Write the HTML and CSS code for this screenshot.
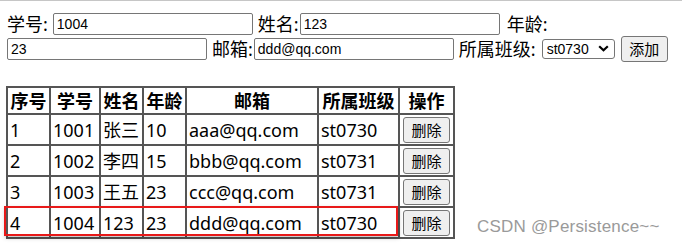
FILE: index.html
```html
<!DOCTYPE html>
<html lang="zh">
<head>
<meta charset="utf-8">
<title>学生管理</title>
<link rel="stylesheet" href="styles.css">
</head>
<body>
<div class="page">
  <form class="form">
    <div class="row">
      <label class="lbl">学号:</label><input class="txt" value="1004">
      <label class="lbl lbl-gap">姓名:</label><input class="txt w2" value="123">
      <label class="lbl lbl-gap2">年龄:</label>
    </div>
    <div class="row">
      <input class="txt" value="23">
      <label class="lbl lbl-gap">邮箱:</label><input class="txt" value="ddd@qq.com">
      <label class="lbl lbl-gap">所属班级:</label>
      <span class="sel">
        <select class="sel-native"><option>st0730</option><option>st0731</option></select>
        <svg class="chev" width="11" height="7" viewBox="0 0 11 7"><path d="M1.2 1.2 L5.5 5.3 L9.8 1.2" fill="none" stroke="#000" stroke-width="2.2"/></svg>
      </span>
      <button type="button" class="btn btn-add">添加</button>
    </div>
  </form>

  <div class="table-wrap">
    <table class="grid">
      <colgroup>
        <col class="c1"><col class="c2"><col class="c3"><col class="c4"><col class="c5"><col class="c6"><col class="c7">
      </colgroup>
      <thead>
        <tr><th>序号</th><th>学号</th><th>姓名</th><th>年龄</th><th>邮箱</th><th>所属班级</th><th>操作</th></tr>
      </thead>
      <tbody>
        <tr><td>1</td><td>1001</td><td>张三</td><td>10</td><td>aaa@qq.com</td><td>st0730</td><td class="op"><button type="button" class="btn btn-del">删除</button></td></tr>
        <tr><td>2</td><td>1002</td><td>李四</td><td>15</td><td>bbb@qq.com</td><td>st0731</td><td class="op"><button type="button" class="btn btn-del">删除</button></td></tr>
        <tr><td>3</td><td>1003</td><td>王五</td><td>23</td><td>ccc@qq.com</td><td>st0731</td><td class="op"><button type="button" class="btn btn-del">删除</button></td></tr>
        <tr><td>4</td><td>1004</td><td>123</td><td>23</td><td>ddd@qq.com</td><td>st0730</td><td class="op"><button type="button" class="btn btn-del">删除</button></td></tr>
      </tbody>
    </table>
    <div class="mark"></div>
  </div>
  <div class="watermark">CSDN @Persistence~~</div>
</div>
</body>
</html>
```

FILE: styles.css
```css
html, body {
  margin: 0;
  padding: 0;
  background: #fff;
}
body {
  width: 682px;
  height: 243px;
  overflow: hidden;
  border-top: 1px solid #c6c6c6;
  box-sizing: border-box;
  font-family: "Noto Sans", "Noto Sans CJK SC", sans-serif;
  color: #000;
}
.page {
  position: relative;
  height: 242px;
}
.form {
  padding: 10px 0 0 7px;
}
.row {
  display: flex;
  align-items: center;
  height: 25px;
}
.lbl {
  font-size: 18px;
  line-height: 22px;
  margin-right: 5px;
  font-family: "Noto Sans", "Noto Sans CJK SC", sans-serif;
}
.lbl-gap { margin-left: 5px; margin-right: 1px; }
.lbl-gap2 { margin-left: 7px; }
.txt {
  box-sizing: border-box;
  width: 200px;
  height: 22px;
  border: 1px solid #767676;
  border-radius: 2px;
  padding: 0 3px;
  margin: 0;
  font-family: "Liberation Sans", Arial, sans-serif;
  font-size: 14px;
  color: #000;
  background: #fff;
}
.sel {
  display: inline-flex;
  align-items: center;
  box-sizing: border-box;
  width: 73px;
  height: 20px;
  border: 1px solid #767676;
  border-radius: 3px;
  margin-left: 5px;
  background: #fff;
}
.sel-native {
  appearance: none;
  -webkit-appearance: none;
  border: 0;
  outline: 0;
  background: transparent;
  width: 54px;
  padding: 0 0 0 4px;
  margin: 0;
  font-family: "Liberation Sans", Arial, sans-serif;
  font-size: 14px;
  color: #000;
  height: 18px;
}
.chev {
  display: block;
  margin-left: 1px;
}
.btn {
  box-sizing: border-box;
  border: 1px solid #767676;
  border-radius: 3px;
  background: #efefef;
  font-family: "Noto Sans CJK SC", sans-serif;
  font-size: 15px;
  line-height: 1;
  color: #000;
  padding: 0;
  margin: 0;
}
.btn-add {
  width: 47px;
  height: 26px;
  margin-left: 6px;
}
.table-wrap {
  position: relative;
  margin: 25px 0 0 6px;
  width: 449px;
}
.grid {
  border: 1px solid #555;
  border-collapse: separate;
  border-spacing: 0;
  table-layout: fixed;
  width: 449px;
  font-size: 18px;
}
.c1 { width: 43px; }
.c2 { width: 50px; }
.c3 { width: 43px; }
.c4 { width: 43px; }
.c5 { width: 132px; }
.c6 { width: 81px; }
.c7 { width: 55px; }
.grid th, .grid td {
  border: 1px solid #555;
  padding: 0 2px;
  white-space: nowrap;
  overflow: hidden;
  line-height: 22px;
}
.grid th {
  height: 25px;
  font-weight: bold;
  text-align: center;
  font-family: "Noto Sans", "Noto Sans CJK SC", sans-serif;
}
.grid td {
  height: 29px;
  text-align: left;
  vertical-align: middle;
  padding-left: 2px;
}
.grid td.op {
  padding: 0;
}
.btn-del {
  display: block;
  width: 47px;
  height: 26px;
  margin: 0 auto;
}
.mark {
  position: absolute;
  left: -2px;
  top: 120px;
  width: 394px;
  height: 30px;
  box-sizing: border-box;
  border: 2px solid #e81919;
  box-shadow: 1px 2px 4px rgba(0,0,0,0.25);
  pointer-events: none;
}
.watermark {
  position: absolute;
  left: 477px;
  top: 216px;
  font-family: "Liberation Sans", Arial, sans-serif;
  font-size: 17px;
  color: #9a9a9a;
  background: rgba(255,255,255,0.85);
  letter-spacing: 0.2px;
}
```
